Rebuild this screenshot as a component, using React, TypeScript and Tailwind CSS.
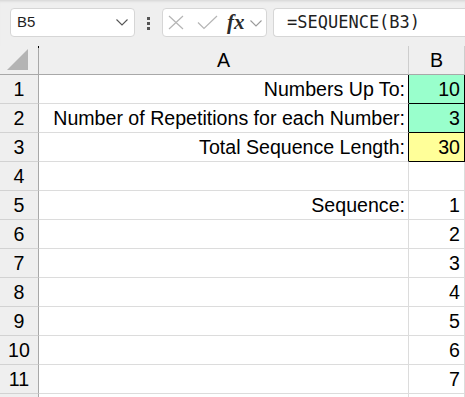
import React from 'react';

type Row = { n: number; a?: string; b?: string; fill?: 'green' | 'yellow' };

const rows: Row[] = [
  { n: 1, a: 'Numbers Up To:', b: '10', fill: 'green' },
  { n: 2, a: 'Number of Repetitions for each Number:', b: '3', fill: 'green' },
  { n: 3, a: 'Total Sequence Length:', b: '30', fill: 'yellow' },
  { n: 4 },
  { n: 5, a: 'Sequence:', b: '1' },
  { n: 6, b: '2' },
  { n: 7, b: '3' },
  { n: 8, b: '4' },
  { n: 9, b: '5' },
  { n: 10, b: '6' },
  { n: 11, b: '7' },
];

function Chevron({ className }: { className?: string }) {
  return (
    <svg width="12" height="7" viewBox="0 0 12 7" className={className}>
      <polyline points="0.5,0.5 6,6 11.5,0.5" fill="none" stroke="currentColor" strokeWidth="1.1" />
    </svg>
  );
}

function Toolbar() {
  return (
    <div className="flex h-[46px] pl-[10px] pt-[8px] shadow-[inset_0_3px_3px_-2px_rgba(0,0,0,0.12)]">
      {/* name box */}
      <div className="flex h-[29px] w-[125px] items-center justify-between rounded-[4px] border border-[#d6d6d6] bg-white pl-[6px] pr-[6px]">
        <span className="text-[15px] text-[#1f1f1f] font-['Liberation_Sans',sans-serif]">B5</span>
        <Chevron className="text-[#555]" />
      </div>

      {/* grip dots */}
      <div className="flex w-[27px] flex-col items-center gap-[2px] pt-[9px]">
        <div className="h-[3px] w-[3px] bg-[#555]" />
        <div className="h-[3px] w-[3px] bg-[#555]" />
        <div className="h-[3px] w-[3px] bg-[#555]" />
      </div>

      {/* cancel / enter / fx */}
      <div className="flex h-[29px] w-[105px] items-center rounded-[4px] border border-[#d6d6d6] bg-white pl-[5px]">
        <svg width="16" height="15" viewBox="0 0 16 15">
          <path d="M1 1 L15 14 M15 1 L1 14" stroke="#b5b5b5" strokeWidth="1.2" fill="none" />
        </svg>
        <svg width="21" height="15" viewBox="0 0 21 15" className="ml-[13px]">
          <polyline points="1,7.5 7,13.5 20,1" stroke="#b5b5b5" strokeWidth="1.2" fill="none" />
        </svg>
        <span className="ml-[9px] text-[21px] font-bold italic leading-none text-[#2b2b2b] font-['Liberation_Serif',serif]">fx</span>
        <Chevron className="ml-[5px] mt-[2px] text-[#9a9a9a]" />
      </div>

      {/* formula */}
      <div className="ml-[6px] flex h-[29px] flex-1 items-center rounded-l-[4px] border border-r-0 border-[#d6d6d6] bg-white pl-[13px]">
        <span className="text-[17px] text-[#1f1f1f] font-['DejaVu_Sans_Mono',monospace]">=SEQUENCE(B3)</span>
      </div>
    </div>
  );
}

function HeaderRow() {
  return (
    <div className="relative flex h-[29px]">
      <div className="absolute left-[38px] top-0 h-[2px] w-[1px] bg-black" />
      <div className="flex w-[39px] items-center justify-center border-r border-b border-[#a8a8a8]">
        <svg width="21" height="21" viewBox="0 0 21 21" className="ml-[-4px] mt-[-1px]">
          <polygon points="21,0 21,21 0,21" fill="#b4b4b4" />
        </svg>
      </div>
      <div className="flex w-[370px] items-end justify-center border-r border-b border-r-[#cdcdcd] border-b-[#a8a8a8] pb-[3px] leading-none">
        A
      </div>
      <div className="flex w-[56px] items-end justify-center border-r border-b border-r-[#cdcdcd] border-b-[#a8a8a8] pb-[3px] leading-none">
        B
      </div>
    </div>
  );
}

function SheetRow({ row }: { row: Row }) {
  const boxed = !!row.fill;
  return (
    <div className="flex h-[29px] shrink-0">
      <div className="flex w-[39px] items-end justify-center border-r border-b border-r-[#a8a8a8] border-b-[#d2d2d2] bg-[#efefef] pb-[3px] leading-none">
        {row.n}
      </div>
      <div
        className={`flex w-[370px] items-end justify-end border-r border-b border-b-[#dcdcdc] bg-white pb-[3px] pr-[3px] leading-none ${
          boxed ? 'border-r-black' : 'border-r-[#dcdcdc]'
        }`}
      >
        {row.a}
      </div>
      <div
        className={`flex w-[56px] items-end justify-end border-r border-b pb-[3px] pr-[4px] leading-none ${
          row.fill === 'green'
            ? 'border-black bg-[#99ffcc]'
            : row.fill === 'yellow'
              ? 'border-black bg-[#ffff99]'
              : 'border-[#dcdcdc] bg-white'
        }`}
      >
        {row.b}
      </div>
    </div>
  );
}

export default function App() {
  return (
    <div className="h-[397px] w-[465px] overflow-hidden bg-[#efefef] text-[19.6px] text-black font-['Liberation_Sans',Arial,sans-serif]">
      <Toolbar />
      <HeaderRow />
      {rows.map(r => (
        <SheetRow key={r.n} row={r} />
      ))}
      {/* partly visible row 12 */}
      <div className="flex h-[29px]">
        <div className="w-[39px] border-r border-[#a8a8a8] bg-[#efefef]" />
        <div className="w-[370px] border-r border-[#dcdcdc] bg-white" />
        <div className="w-[56px] border-r border-[#dcdcdc] bg-white" />
      </div>
    </div>
  );
}
